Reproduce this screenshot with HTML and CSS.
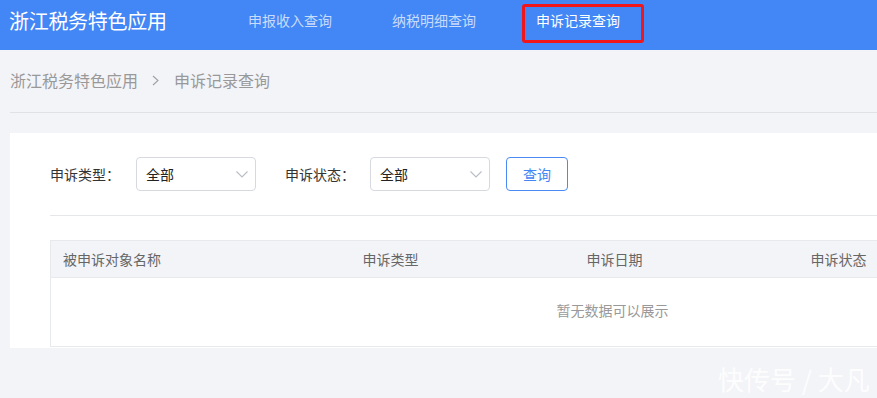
FILE: index.html
```html
<!DOCTYPE html>
<html lang="zh-CN">
<head>
<meta charset="utf-8">
<title>申诉记录查询</title>
<link rel="stylesheet" href="styles.css">
</head>
<body>
<header class="topbar">
  <div class="brand">浙江税务特色应用</div>
  <nav class="nav">
    <a class="nav-item">申报收入查询</a>
    <a class="nav-item">纳税明细查询</a>
    <a class="nav-item active">申诉记录查询</a>
  </nav>
</header>
<div class="crumbs">
  <span>浙江税务特色应用</span>
  <svg class="crumb-sep" width="7" height="11" viewBox="0 0 7 11"><path d="M1 1 L6 5.5 L1 10" fill="none" stroke="#a0a0a0" stroke-width="1.1"/></svg>
  <span>申诉记录查询</span>
</div>
<main class="card">
  <div class="filters">
    <label class="flabel">申诉类型：</label>
    <div class="select"><span>全部</span><svg class="chev" width="12" height="7" viewBox="0 0 12 7"><path d="M0.5 0.5 L6 6 L11.5 0.5" fill="none" stroke="#b8bcc4" stroke-width="1.1"/></svg></div>
    <label class="flabel second">申诉状态：</label>
    <div class="select"><span>全部</span><svg class="chev" width="12" height="7" viewBox="0 0 12 7"><path d="M0.5 0.5 L6 6 L11.5 0.5" fill="none" stroke="#b8bcc4" stroke-width="1.1"/></svg></div>
    <button class="btn">查询</button>
  </div>
  <div class="divider"></div>
  <table class="grid">
    <colgroup><col class="c1"><col class="cn"><col class="cn"><col class="cn"><col class="cn"></colgroup>
    <thead>
      <tr><th class="left">被申诉对象名称</th><th>申诉类型</th><th>申诉日期</th><th>申诉状态</th><th></th></tr>
    </thead>
    <tbody>
      <tr><td class="empty" colspan="5">暂无数据可以展示</td></tr>
    </tbody>
  </table>
</main>
<div class="watermark">快传号 / 大凡</div>
</body>
</html>
```

FILE: styles.css
```css
html, body {
  margin: 0;
  padding: 0;
  overflow: hidden;
}
body {
  background: #f3f4f8;
  font-family: "Noto Sans CJK SC", "Microsoft YaHei", "Liberation Sans", sans-serif;
  color: #333;
  width: 877px;
  height: 398px;
  position: relative;
}
.topbar {
  height: 50px;
  background: #4386f5;
  display: flex;
  align-items: flex-start;
  padding-left: 9px;
  box-sizing: border-box;
}
.brand {
  width: 225px;
  flex: none;
  color: #fff;
  font-size: 20px;
  line-height: 28px;
  margin-top: 7px;
  letter-spacing: -0.3px;
}
.nav {
  display: flex;
  gap: 22px;
  padding-top: 4px;
}
.nav-item {
  display: block;
  font-size: 14px;
  line-height: 20px;
  padding: 3px 21px 10px 11px;
  border: 3px solid transparent;
  border-radius: 3px;
  color: rgba(255, 255, 255, 0.72);
  white-space: nowrap;
}
.nav-item.active {
  color: #fff;
  border-color: #f0161a;
}
.crumbs {
  margin: 19px 0 0 10px;
  padding-bottom: 21px;
  border-bottom: 1px solid #e1e2e6;
  font-size: 16px;
  line-height: 22px;
  color: #999;
  display: flex;
  align-items: center;
}
.crumb-sep {
  margin: 0 15px 0 14px;
}
.card {
  display: block;
  margin: 20px 0 0 10px;
  width: 1200px;
  background: #fff;
  padding: 24px 0 1px 40px;
  box-sizing: border-box;
}
.filters {
  display: flex;
  align-items: center;
  height: 34px;
}
.flabel {
  font-size: 14px;
  color: #333;
  width: 86px;
  flex: none;
}
.flabel.second {
  margin-left: 29px;
  width: 85px;
}
.select {
  width: 120px;
  height: 34px;
  box-sizing: border-box;
  border: 1px solid #d6d9e0;
  border-radius: 4px;
  display: flex;
  align-items: center;
  justify-content: space-between;
  padding: 0 7px 0 9px;
  font-size: 14px;
  color: #222;
  flex: none;
}
.chev {
  margin-top: 1px;
}
.btn {
  margin-left: 16px;
  width: 62px;
  height: 34px;
  box-sizing: border-box;
  border: 1px solid #4a8af4;
  border-radius: 4px;
  background: #fff;
  color: #4385f4;
  font-family: inherit;
  font-size: 14px;
  padding: 0;
}
.divider {
  margin-top: 24px;
  height: 1px;
  background: #e6e7eb;
}
.grid {
  margin-top: 24px;
  width: 1124px;
  border-collapse: collapse;
  table-layout: fixed;
  font-size: 14px;
}
.c1 { width: 228px; }
.cn { width: 224px; }
.grid th {
  background: #f3f4f8;
  color: #666;
  font-weight: normal;
  height: 36px;
  padding: 0;
  text-align: center;
  border-top: 1px solid #e8e9ed;
}
.grid th.left {
  text-align: left;
  padding-left: 12px;
}
.grid td.empty {
  height: 64px;
  text-align: center;
  color: #999;
  border: 1px solid #e8e9ed;
  padding: 0 0 4px 0;
}
.grid thead tr {
  border-left: 1px solid #e8e9ed;
}
.watermark {
  position: absolute;
  left: 718px;
  top: 361px;
  font-size: 26px;
  line-height: 36px;
  color: rgba(255, 255, 255, 0.85);
  white-space: nowrap;
}
```
